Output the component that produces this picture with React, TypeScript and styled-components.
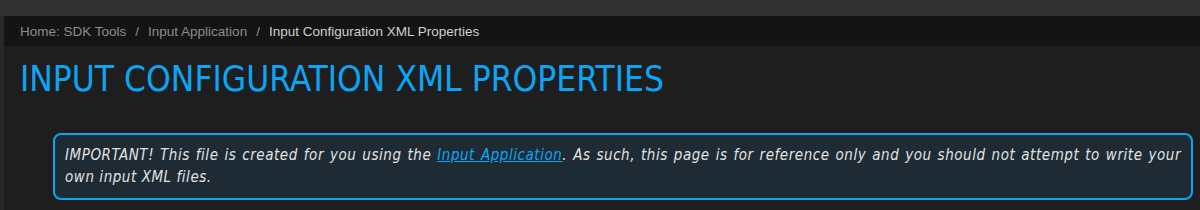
import React from "react";
import styled, { createGlobalStyle } from "styled-components";

const GlobalStyle = createGlobalStyle`
	html, body {
		margin: 0;
		padding: 0;
		background: #1e1e1e;
	}
`;

const Page = styled.div`
	display: flex;
	flex-flow: column nowrap;
	width: 1200px;
	height: 210px;
	overflow: hidden;
	background: #1e1e1e;
`;

const TopStrip = styled.div`
	height: 16px;
	flex-shrink: 0;
	background: #313131;
`;

const Main = styled.div`
	flex: 1;
	display: flex;
	flex-flow: column nowrap;
	border-left: 4px solid #282828;
	background: #1e1e1e;
`;

const Breadcrumbs = styled.nav`
	display: flex;
	align-items: center;
	height: 30px;
	padding-left: 16px;
	background: #141414;
	font-family: "Liberation Sans", Arial, sans-serif;
	font-size: 13.5px;
	color: #8c8c8c;
`;

const Crumb = styled.span<{ $current?: boolean }>`
	color: ${(p) => (p.$current ? "#cfcfcf" : "#8c8c8c")};
`;

const Separator = styled.span`
	margin: 0 9px;
	color: #8c8c8c;
`;

const Title = styled.h1`
	margin: 13px 0 0 16px;
	font-family: "DejaVu Sans Condensed", "DejaVu Sans", sans-serif;
	font-weight: normal;
	font-size: 35px;
	line-height: 40px;
	color: #0aa6f5;
`;

const Notice = styled.div`
	margin: 34px 7px 0 49px;
	padding: 9px 10px 10px 10px;
	border: 2px solid #0aa6f5;
	border-radius: 8px;
	background: #1e2b34;
	font-family: "DejaVu Sans Condensed", "DejaVu Sans", sans-serif;
	font-style: italic;
	font-size: 15px;
	line-height: 22px;
	letter-spacing: 0.55px;
	color: #e2e2e2;
	text-align: justify;

	& a {
		color: #0aa6f5;
		text-decoration: underline;
	}
`;

const App: React.FC = () => {
	return (
		<>
			<GlobalStyle />
			<Page>
				<TopStrip />
				<Main>
					<Breadcrumbs>
						<Crumb>Home: SDK Tools</Crumb>
						<Separator>/</Separator>
						<Crumb>Input Application</Crumb>
						<Separator>/</Separator>
						<Crumb $current>Input Configuration XML Properties</Crumb>
					</Breadcrumbs>
					<Title>INPUT CONFIGURATION XML PROPERTIES</Title>
					<Notice>
						IMPORTANT! This file is created for you using the{" "}
						<a href="#">Input Application</a>. As such, this page is for
						reference only and you should not attempt to write your own input
						XML files.
					</Notice>
				</Main>
			</Page>
		</>
	);
};

export default App;
